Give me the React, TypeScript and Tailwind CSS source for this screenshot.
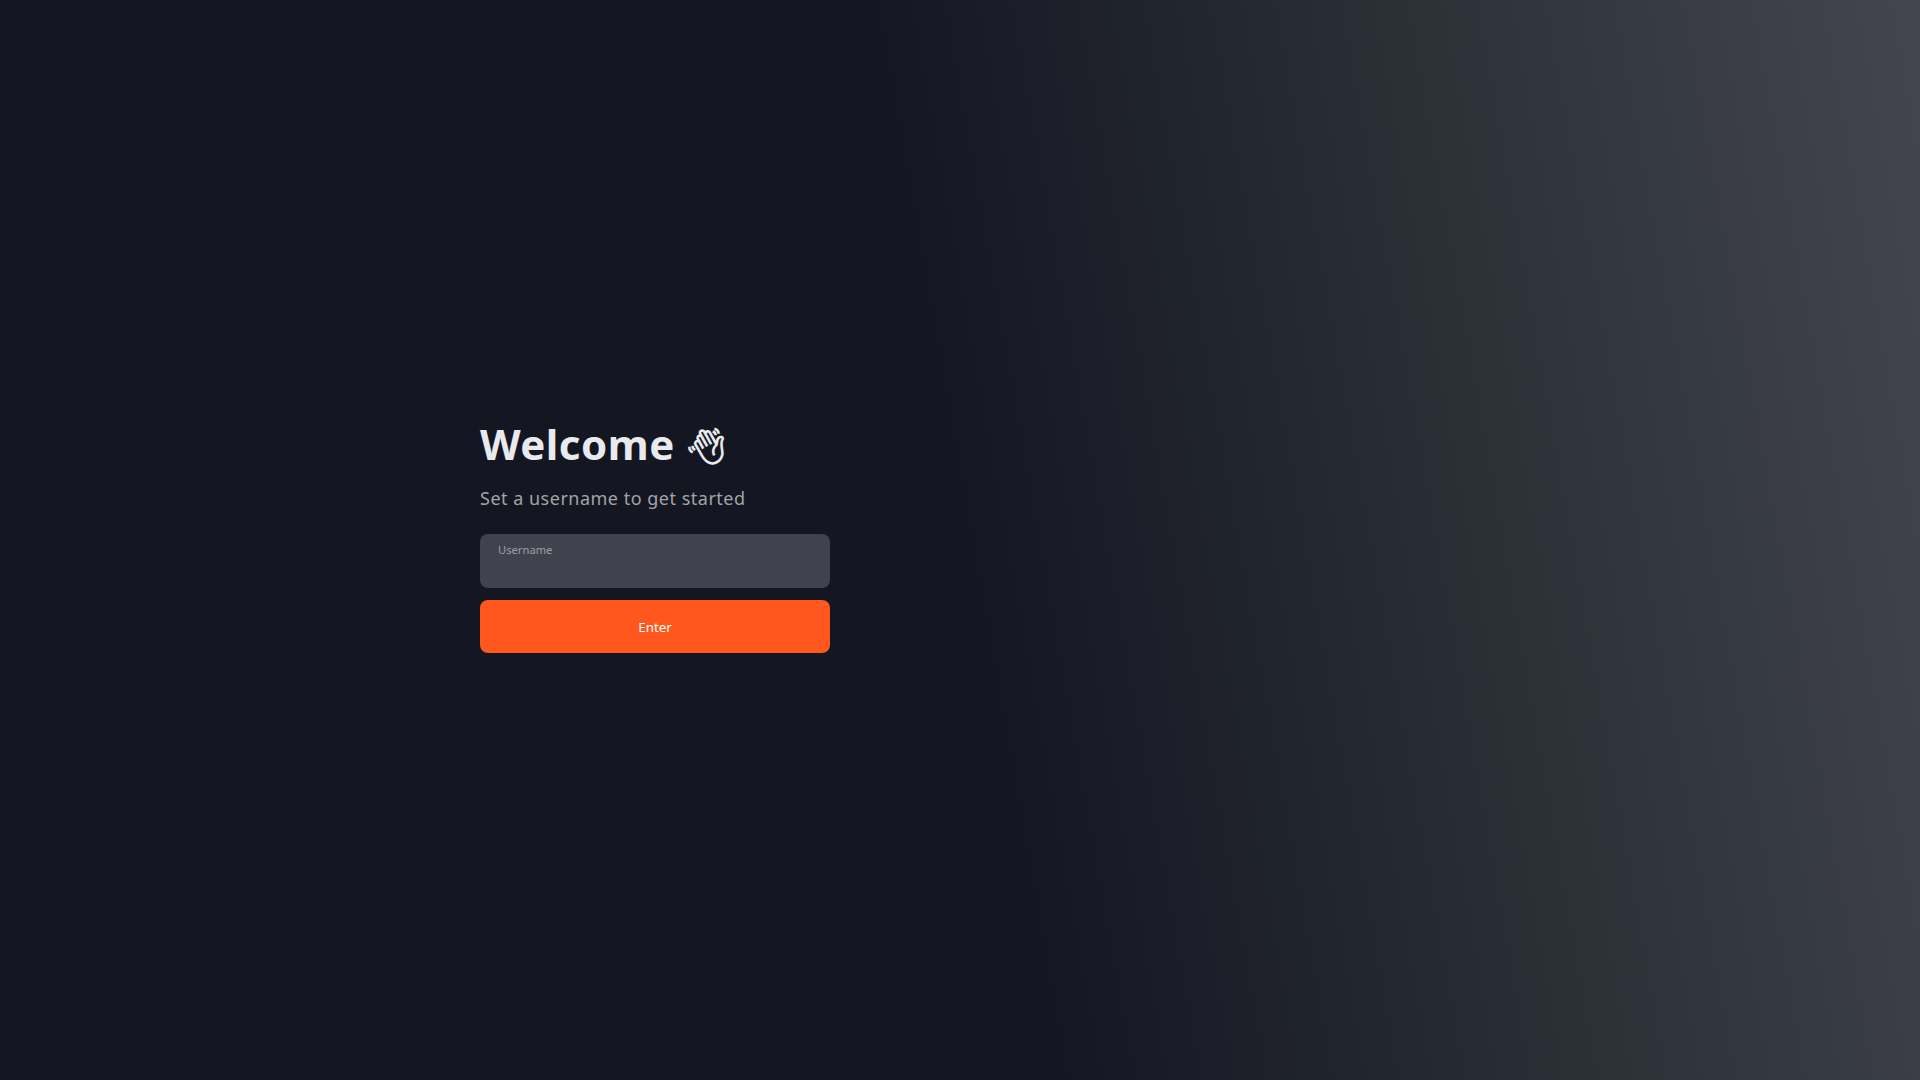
export default function App() {
  return (
    <div className="min-h-screen flex items-center bg-[linear-gradient(80deg,#141722_50%,#2b2f36_75%,#43464f_100%)] pl-[480px] pb-[14px] font-['Noto_Sans',sans-serif]">
      <form className="w-[350px] flex flex-col">
        <h1 className="text-[42px] leading-[62px] font-bold tracking-[0.5px] text-[#e8eaed]">
          Welcome <span className="inline-block -translate-y-[3px] rotate-[16deg] text-[35px] leading-none">{"\u{1F44B}\u{FE0E}"}</span>
        </h1>
        <p className="mt-[9px] text-[18px] leading-[28px] tracking-[0.5px] text-[#a3a3a6]">Set a username to get started</p>
        <label className="mt-[22px] h-[54px] rounded-[8px] bg-[#40434e] pl-[18px] pt-[8px] flex flex-col">
          <span className="text-[11.2px] leading-[16px] text-[#9d9ea3]">Username</span>
          <input type="text" className="w-full bg-transparent outline-none text-[14px] text-white" />
        </label>
        <button type="button" className="mt-[12px] h-[53px] rounded-[8px] bg-[#ff571e] pt-[2px] text-[13.33px] text-white">
          Enter
        </button>
      </form>
    </div>
  );
}
